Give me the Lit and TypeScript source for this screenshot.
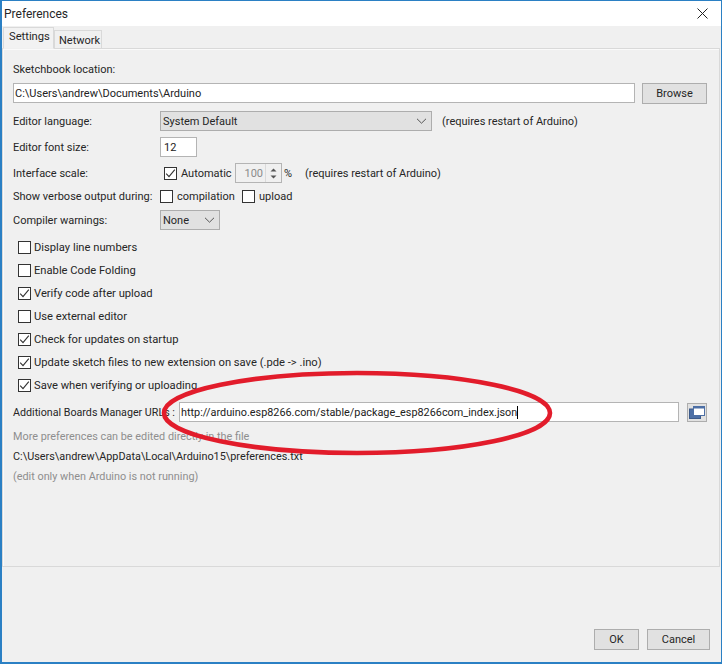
import { LitElement, html, css, svg } from "lit";
import { customElement } from "lit/decorators.js";

const chevron = (w = 11) => html`<svg class="chev" width=${w} height="6" viewBox="0 0 11 6"><path d="M1 .8 5.5 5.2 10 .8" fill="none" stroke="#555" stroke-width="1"/></svg>`;

const box = (on: boolean) => html`<svg class="box" width="13" height="13" viewBox="0 0 13 13">
  <rect x=".5" y=".5" width="12" height="12" fill="#fff" stroke="#333"/>
  ${on ? svg`<path d="M2.2 6.6 5 9.6 10.8 2.6" fill="none" stroke="#333" stroke-width="1.1"/>` : ""}
</svg>`;

@customElement("app-root")
export class AppRoot extends LitElement {
  static styles = css`
    :host { display: block; width: 722px; height: 664px; }
    * { box-sizing: border-box; }
    .win {
      position: relative; width: 722px; height: 664px; display: flex; flex-direction: column;
      background: #f0f0f0; border: 1px solid #2b80c4; border-left-width: 2px; border-bottom-width: 2px;
      font: 11px/18px Roboto, "Noto Sans", sans-serif; color: #262626;
    }
    .title { height: 25px; flex: none; background: #fff; display: flex; align-items: center; justify-content: space-between; padding: 0 13px 0 2px; font-size: 12px; }
    .tabs { height: 22px; flex: none; display: flex; align-items: flex-end; padding-left: 1px; position: relative; z-index: 1; }
    .tab { height: 18px; padding: 2px 0 0 4px; border: 1px solid #d9d9d9; border-bottom: none; background: #f0f0f0; display: flex; align-items: center; width: 48px; white-space: nowrap; }
    .tab.on { height: 22px; width: 51px; padding: 0 0 3px 5px; border-bottom: 1px solid #f0f0f0; margin-bottom: -1px; background: #f2f2f2; font-size: 11.2px; }
    .panel { height: 519px; flex: none; margin: 0 1px 0 0; border: 1px solid #d9d9d9; box-shadow: inset 1px 1px 0 #fafafa; padding: 11px 11px 0 10px; display: flex; flex-direction: column; }
    .row { display: flex; align-items: center; flex: none; }
    .top { align-items: flex-start; }
    .h18 { height: 18px; }
    .h20 { height: 20px; }
    .txt { padding-top: 2px; }
    .foot-line { font-size: 10.85px; }
    .label { width: 147px; flex: none; white-space: nowrap; padding-top: 2px; }
    .mt5 { margin-top: 5px; }
    .mt6 { margin-top: 6px; }
    .mt4 { margin-top: 4px; }
    .mt8 { margin-top: 8px; }
    .mt2 { margin-top: 2px; }
    .field { height: 20px; background: #fff; border: 1px solid #b4b4b4; display: flex; align-items: center; padding: 2px 1px 0; white-space: nowrap; color: #222; }
    .path { width: 622px; }
    .btn { background: #e1e1e1; border: 1px solid #adadad; display: flex; align-items: center; justify-content: center; padding-top: 1px; }
    .browse { width: 65px; height: 21px; margin-left: 7px; }
    .select { background: #e1e1e1; border: 1px solid #adadad; height: 20px; display: flex; align-items: center; justify-content: space-between; padding: 0 4px 0 2px; }
    .select span { padding-top: 2px; }
    .lang { width: 272px; }
    .warn { width: 60px; }
    .note { margin-left: 10px; padding-top: 2px; }
    .size { width: 37px; padding-left: 3px; }
    .auto { margin-left: 4px; width: 71px; flex: none; display: flex; align-items: center; }
    .auto .t { margin-left: 4px; }
    .box { flex: none; display: block; }
    .t { margin-left: 4px; white-space: nowrap; padding-top: 2px; }
    .spin { width: 47px; height: 20px; border: 1px solid #b4b4b4; background: #f0f0f0; display: flex; color: #8a8a8a; }
    .spinv { flex: 1; text-align: right; padding-right: 2px; line-height: 20px; }
    .arrows { width: 16px; background: #f0f0f0; border-left: 1px solid #dadada; display: flex; flex-direction: column; align-items: center; justify-content: center; gap: 3px; }
    .pct { margin-left: 2px; padding-top: 2px; }
    .gap-note { margin-left: 13px; padding-top: 2px; }
    .compile { width: 65px; flex: none; }
    .list { margin-top: 8px; padding-left: 5px; display: flex; flex-direction: column; gap: 5px; font-size: 11.2px; }
    .list .t { margin-left: 3px; }
    .item { display: flex; align-items: center; height: 18px; white-space: nowrap; }
    .url { width: 500px; padding-left: 1px; font-size: 10.85px; }
    .label-url { white-space: nowrap; width: 166px; flex: none; padding-top: 2px; font-size: 10.7px; }
    .caret { display: inline-block; width: 1px; height: 13px; background: #000; margin-top: -2px; }
    .copy { width: 20px; height: 19px; margin-left: 8px; padding: 0; }
    .muted { color: #8e8e8e; }
    .foot { flex: 1; display: flex; justify-content: flex-end; align-items: flex-start; padding: 62px 11px 0 0; gap: 8px; }
    .ok { width: 45px; height: 21px; }
    .cancel { width: 63px; height: 21px; }
    .ring { position: absolute; left: -2px; top: -1px; pointer-events: none; }
  `;

  render() {
    const items: [string, boolean][] = [
      ["Display line numbers", false],
      ["Enable Code Folding", false],
      ["Verify code after upload", true],
      ["Use external editor", false],
      ["Check for updates on startup", true],
      ["Update sketch files to new extension on save (.pde -> .ino)", true],
      ["Save when verifying or uploading", true],
    ];
    return html`<div class="win">
      <div class="title"><span>Preferences</span>
        <svg width="11" height="11" viewBox="0 0 11 11"><path d="M.5.5l10 10M10.5.5l-10 10" stroke="#222" stroke-width="1"/></svg>
      </div>
      <div class="tabs"><div class="tab on">Settings</div><div class="tab">Network</div></div>
      <div class="panel">
        <div class="row h18 txt">Sketchbook location:</div>
        <div class="row h20 mt5 top">
          <div class="field path">C:\\Users\\andrew\\Documents\\Arduino</div>
          <div class="btn browse">Browse</div>
        </div>
        <div class="row h20 mt8">
          <div class="label">Editor language:</div>
          <div class="select lang"><span>System Default</span>${chevron()}</div>
          <div class="note">(requires restart of Arduino)</div>
        </div>
        <div class="row h20 mt6">
          <div class="label">Editor font size:</div>
          <div class="field size">12</div>
        </div>
        <div class="row h20 mt6">
          <div class="label">Interface scale:</div>
          <div class="auto">${box(true)}<span class="t">Automatic</span></div>
          <div class="spin"><div class="spinv">100</div>
            <div class="arrows">
              <svg width="7" height="4" viewBox="0 0 7 4"><path d="M.5 3.5 3.5.5 6.5 3.5Z" fill="#555"/></svg>
              <svg width="7" height="4" viewBox="0 0 7 4"><path d="M.5.5 3.5 3.5 6.5.5Z" fill="#555"/></svg>
            </div>
          </div>
          <span class="pct">%</span>
          <span class="gap-note">(requires restart of Arduino)</span>
        </div>
        <div class="row h18 mt4">
          <div class="label">Show verbose output during:</div>
          ${box(false)}<span class="t compile">compilation</span>
          ${box(false)}<span class="t">upload</span>
        </div>
        <div class="row h20 mt5">
          <div class="label">Compiler warnings:</div>
          <div class="select warn"><span>None</span>${chevron()}</div>
        </div>
        <div class="list">
          ${items.map(([t, on]) => html`<div class="item">${box(on)}<span class="t">${t}</span></div>`)}
        </div>
        <div class="row h20 mt8">
          <div class="label-url">Additional Boards Manager URLs :</div>
          <div class="field url">http://arduino.esp8266.com/stable/package_esp8266com_index.json<span class="caret"></span></div>
          <div class="btn copy">
            <svg width="16" height="13" viewBox="0 0 16 13"><rect x=".5" y="3" width="11" height="9.5" fill="#4d6fa5" stroke="#3c5a8a"/><rect x="4.5" y=".5" width="11" height="9" fill="#fff" stroke="#4d6fa5"/><rect x="4.5" y=".5" width="11" height="2" fill="#4d6fa5"/></svg>
          </div>
        </div>
        <div class="row h18 mt5 muted txt foot-line">More preferences can be edited directly in the file</div>
        <div class="row h18 mt2 txt foot-line">C:\\Users\\andrew\\AppData\\Local\\Arduino15\\preferences.txt</div>
        <div class="row h18 mt2 muted txt foot-line">(edit only when Arduino is not running)</div>
      </div>
      <div class="foot"><div class="btn ok">OK</div><div class="btn cancel">Cancel</div></div>
      <svg class="ring" width="722" height="664" viewBox="0 0 722 664"><ellipse cx="357" cy="413" rx="193" ry="40" fill="none" stroke="#e21c2b" stroke-width="4.6"/></svg>
    </div>`;
  }
}
